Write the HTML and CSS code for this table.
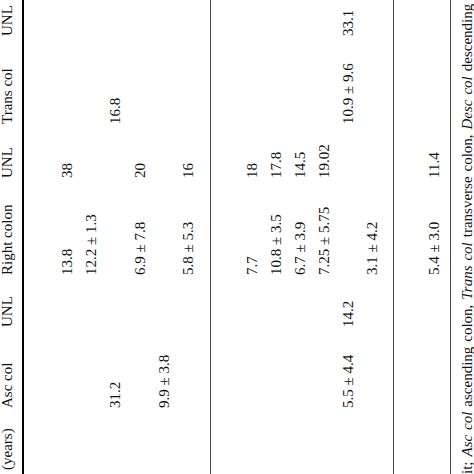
FILE: index.html
```html
<!DOCTYPE html>
<html>
<head>
<meta charset="utf-8">
<link rel="stylesheet" href="styles.css">
</head>
<body>
<div class="page">
  <div class="row head">
    <span>(years)</span><span>Asc col</span><span>UNL</span><span>Right colon</span><span>UNL</span><span>Trans col</span><span>UNL</span>
  </div>
  <div class="group g1">
    <div class="row"><span></span><span></span><span></span><span></span><span></span><span></span><span></span></div>
    <div class="row"><span></span><span></span><span></span><span>13.8</span><span>38</span><span></span><span></span></div>
    <div class="row"><span></span><span></span><span></span><span>12.2 ± 1.3</span><span></span><span></span><span></span></div>
    <div class="row"><span></span><span>31.2</span><span></span><span></span><span></span><span>16.8</span><span></span></div>
    <div class="row"><span></span><span></span><span></span><span>6.9 ± 7.8</span><span>20</span><span></span><span></span></div>
    <div class="row"><span></span><span>9.9 ± 3.8</span><span></span><span></span><span></span><span></span><span></span></div>
    <div class="row"><span></span><span></span><span></span><span>5.8 ± 5.3</span><span>16</span><span></span><span></span></div>
  </div>
  <div class="group g2">
    <div class="row"><span></span><span></span><span></span><span></span><span></span><span></span><span></span></div>
    <div class="row"><span></span><span></span><span></span><span>7.7</span><span>18</span><span></span><span></span></div>
    <div class="row"><span></span><span></span><span></span><span>10.8 ± 3.5</span><span>17.8</span><span></span><span></span></div>
    <div class="row"><span></span><span></span><span></span><span>6.7 ± 3.9</span><span>14.5</span><span></span><span></span></div>
    <div class="row"><span></span><span></span><span></span><span>7.25 ± 5.75</span><span>19.02</span><span></span><span></span></div>
    <div class="row"><span></span><span>5.5 ± 4.4</span><span>14.2</span><span></span><span></span><span>10.9 ± 9.6</span><span>33.1</span></div>
    <div class="row"><span></span><span></span><span></span><span>3.1 ± 4.2</span><span></span><span></span><span></span></div>
  </div>
  <div class="group g3">
    <div class="row"><span></span><span></span><span></span><span></span><span></span><span></span><span></span></div>
    <div class="row"><span></span><span></span><span></span><span>5.4 ± 3.0</span><span>11.4</span><span></span><span></span></div>
  </div>
  <p class="note">limit; <i>Asc col</i> ascending colon, <i>Trans col</i> transverse colon, <i>Desc col</i> descending colon</p>
</div>
</body>
</html>
```

FILE: styles.css
```css
html, body {
  margin: 0;
  padding: 0;
  background: #fff;
  overflow: hidden;
}
.page {
  width: 474px;
  height: 474px;
  overflow: hidden;
  transform: rotate(-90deg);
  font-family: "Liberation Serif", "Times New Roman", serif;
  font-size: 15px;
  color: #111;
  background: #fff;
  box-sizing: border-box;
  padding-left: 4px;
}
.row {
  display: grid;
  grid-template-columns: 62px 81px 52px 97px 54px 88px 1fr;
  white-space: nowrap;
  margin-left: -4px;
  padding-left: 4px;
}
.head {
  margin-top: -1px;
  height: 23px;
  line-height: 16px;
  border-bottom: 2px solid #000;
}
.group {
  margin-left: -4px;
  padding-left: 4px;
}
.group .row {
  margin-left: -4px;
}
.g1 {
  padding-top: 6.8px;
  padding-bottom: 9.8px;
  border-bottom: 1px solid #444;
}
.g1 .row {
  height: 24.2px;
  line-height: 24.2px;
}
.g2 {
  padding-top: 4.9px;
  padding-bottom: 9.1px;
  border-bottom: 1px solid #444;
}
.g2 .row,
.g3 .row {
  height: 24px;
  line-height: 24px;
}
.g3 {
  padding-top: 4.4px;
  padding-bottom: 3.6px;
  border-bottom: 1px solid #444;
}
.note {
  margin: 7.9px 0 0 0;
  line-height: 16px;
  white-space: nowrap;
  text-indent: -24px;
  word-spacing: 1.2px;
}
```
